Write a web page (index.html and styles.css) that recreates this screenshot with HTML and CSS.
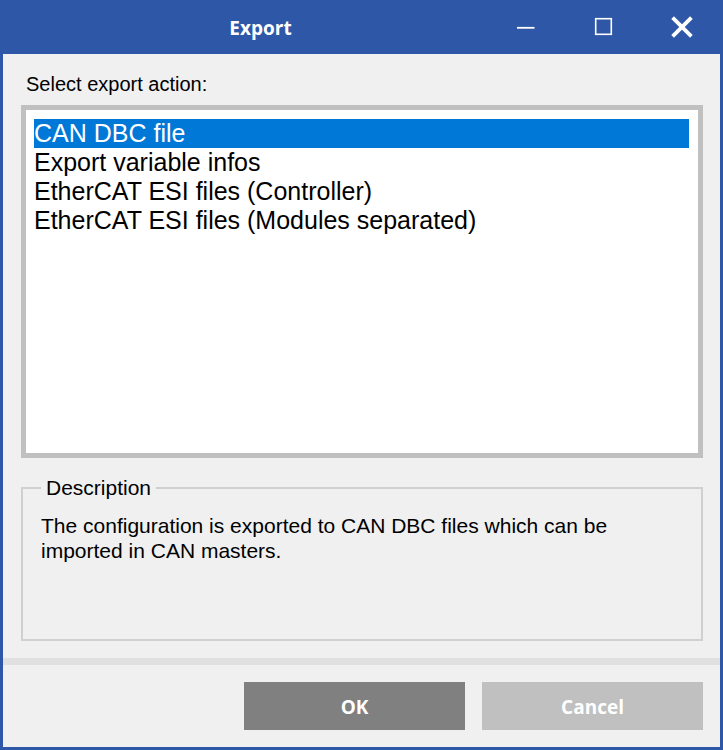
FILE: index.html
```
<!DOCTYPE html>
<html lang="en">
<head>
    <meta charset="UTF-8">
    <meta name="viewport" content="width=device-width, initial-scale=1.0">
    <title>Export</title>
    <link rel="stylesheet" href="styles.css">
</head>
<body>
    <form class="dialog">
        <header class="titlebar">
            <h1 class="title">Export</h1>
            <button type="button" class="window-btn" aria-label="Minimize">
                <svg width="24" height="24" viewBox="0 0 24 24"><path d="M3 12.8H20.5" stroke="#fff" stroke-width="1.8"/></svg>
            </button>
            <button type="button" class="window-btn" aria-label="Maximize">
                <svg width="24" height="24" viewBox="0 0 24 24"><rect x="3.7" y="3.7" width="15.6" height="15.6" fill="none" stroke="#fff" stroke-width="1.6"/></svg>
            </button>
            <button type="button" class="window-btn" aria-label="Close">
                <svg width="24" height="24" viewBox="0 0 24 24"><path d="M2.6 2.6L21.4 21.4M21.4 2.6L2.6 21.4" stroke="#fff" stroke-width="3.8"/></svg>
            </button>
        </header>

        <main class="content">
            <label class="list-label" for="exportAction">Select export action:</label>
            <select class="action-list" id="exportAction" size="11">
                <option selected>CAN DBC file</option>
                <option>Export variable infos</option>
                <option>EtherCAT ESI files (Controller)</option>
                <option>EtherCAT ESI files (Modules separated)</option>
            </select>
            <fieldset class="description">
                <legend>Description</legend>
                <p>The configuration is exported to CAN DBC files which can be imported in CAN masters.</p>
            </fieldset>
        </main>

        <footer class="footer">
            <button type="submit" class="btn btn-ok">OK</button>
            <button type="button" class="btn btn-cancel">Cancel</button>
        </footer>
    </form>
</body>
</html>
```
FILE: styles.css
```
* {
    box-sizing: border-box;
}
body {
    margin: 0;
    font-family: "Liberation Sans", Arial, sans-serif;
    font-size: 20px;
    color: #000;
    background-color: #f0f0f0;
}
.dialog {
    display: flex;
    flex-direction: column;
    min-height: 100vh;
    border: 3px solid #2f57a7;
    border-top: none;
    background-color: #f0f0f0;
}
.titlebar {
    display: flex;
    align-items: center;
    height: 54px;
    margin-right: -1px;
    background-color: #2f57a7;
    color: #fff;
}
.title {
    flex: 1;
    margin: 0;
    padding-top: 2px;
    padding-left: 31px;
    font-family: "Open Sans", "Noto Sans", sans-serif;
    font-size: 19px;
    font-weight: bold;
    text-align: center;
}
.window-btn {
    display: flex;
    align-items: center;
    justify-content: center;
    width: 78px;
    height: 54px;
    padding: 0;
    border: none;
    background: none;
    cursor: pointer;
}
.content {
    flex: 1;
    display: flex;
    flex-direction: column;
    padding: 18px 17px 17px 18px;
}
.list-label {
    padding-left: 5px;
    margin-bottom: 9px;
    line-height: 24px;
}
.action-list {
    flex: 1;
    width: 100%;
    margin: 0 0 18px;
    padding: 9px 9px 9px 8px;
    border: 5px solid #c0c0c0;
    border-radius: 0;
    outline: none;
    background-color: #fff;
    font-family: inherit;
    font-size: 25px;
    overflow: hidden;
}
.action-list option {
    height: 29px;
    min-height: 29px;
    padding: 0;
    line-height: 29px;
    color: #000;
}
.action-list option:checked {
    background: linear-gradient(#0078d7, #0078d7);
    -webkit-text-fill-color: #fff;
}
.description {
    min-width: 0;
    height: 165px;
    margin: 0;
    padding: 13px 18px;
    border: 2px solid #d0d0d0;
    font-size: 21px;
}
.description legend {
    padding: 0 5px;
    line-height: 24px;
}
.description p {
    margin: 0;
    line-height: 25px;
}
.footer {
    display: flex;
    justify-content: flex-end;
    gap: 17px;
    padding: 17px;
    border-top: 7px solid #e0e0e0;
}
.btn {
    width: 221px;
    height: 48px;
    padding: 2px 0 0;
    border: none;
    color: #fff;
    font-family: "Open Sans", "Noto Sans", sans-serif;
    font-size: 19px;
    font-weight: bold;
    cursor: pointer;
}
.btn-ok {
    background-color: #808080;
}
.btn-cancel {
    background-color: #c0c0c0;
}
```
